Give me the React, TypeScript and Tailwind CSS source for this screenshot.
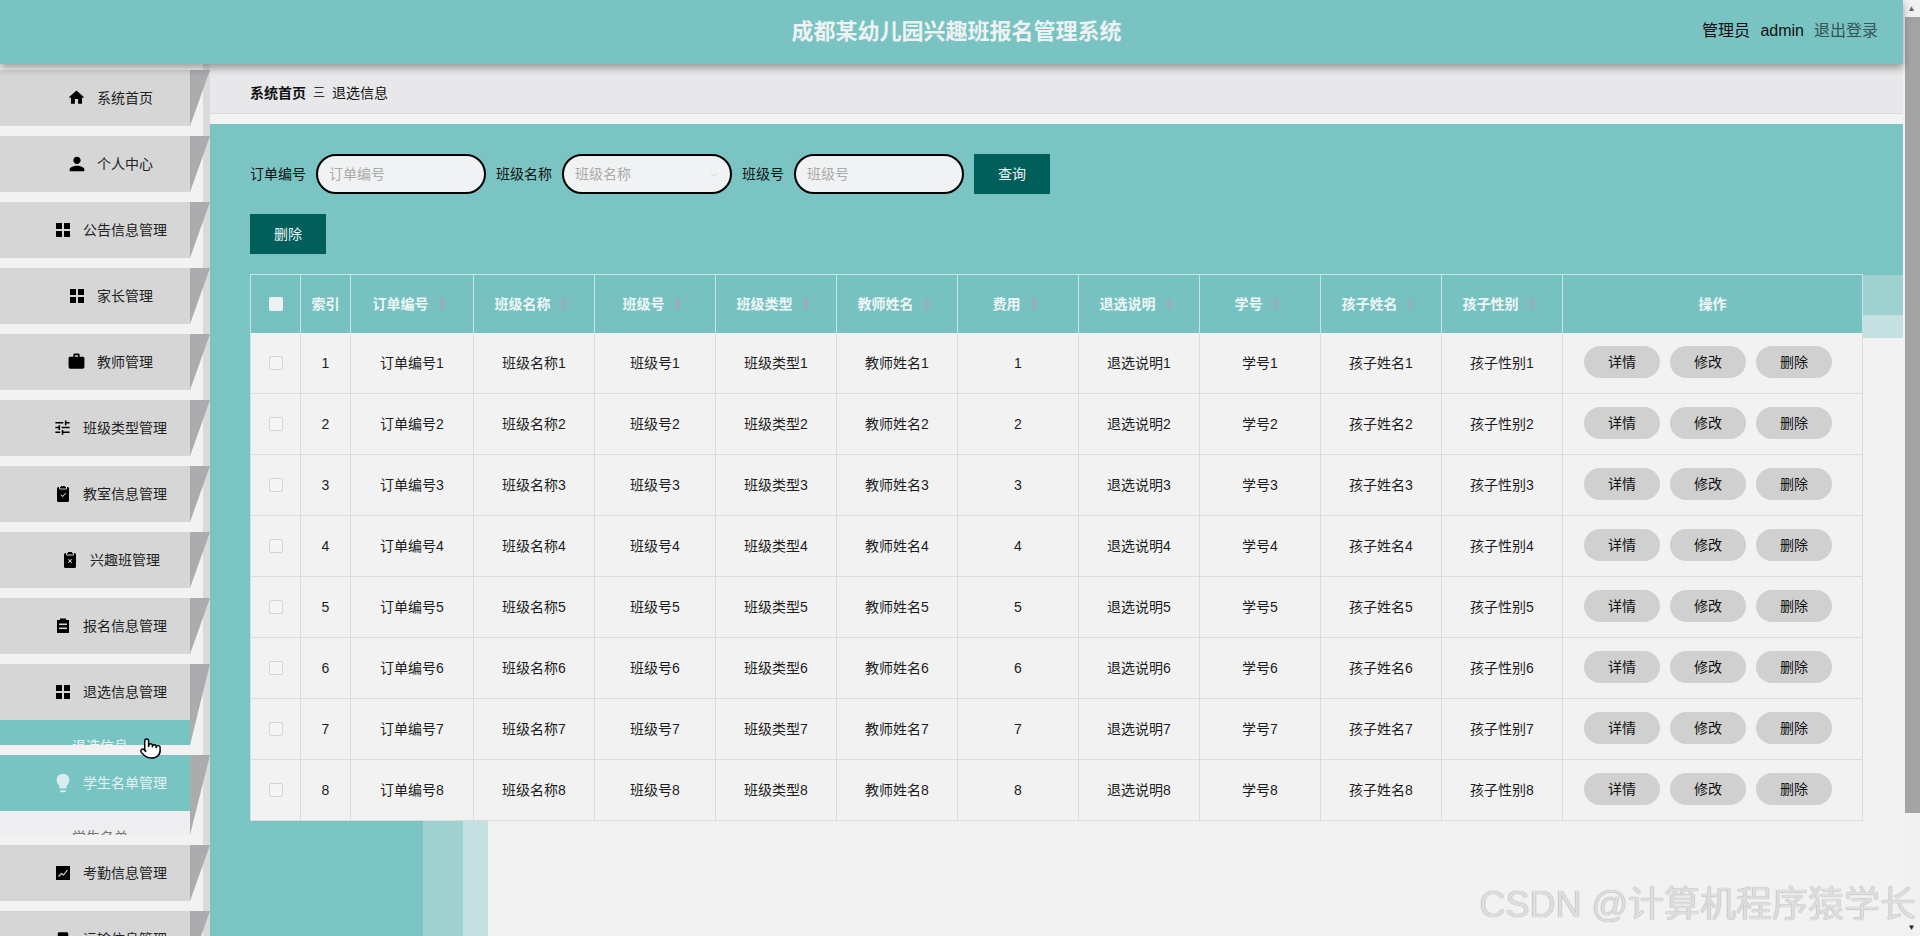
import React from 'react';
import { ChevronDown, Pointer } from 'lucide-react';
import { MdHome, MdPerson, MdWork, MdTune, MdLightbulb, MdBookmark } from 'react-icons/md';
import { BsClipboard2CheckFill, BsClipboard2XFill } from 'react-icons/bs';

// four black squares used by several menu entries
function GridIcon() {
  return (
    <svg width="14" height="14" viewBox="0 0 14 14" fill="#000">
      <rect x="0" y="0" width="6" height="6" />
      <rect x="8" y="0" width="6" height="6" />
      <rect x="0" y="8" width="6" height="6" />
      <rect x="8" y="8" width="6" height="6" />
    </svg>
  );
}

function ListClipIcon() {
  return (
    <svg width="14" height="15" viewBox="0 0 14 15">
      <path d="M1 2h3V0.5h6V2h3v13H1z" fill="#000" />
      <rect x="3" y="5.5" width="8" height="1.6" fill="#d6d6d6" />
      <rect x="3" y="9.5" width="8" height="1.6" fill="#d6d6d6" />
    </svg>
  );
}

function ChartIcon() {
  return (
    <svg width="14" height="14" viewBox="0 0 14 14">
      <rect width="14" height="14" fill="#000" />
      <path d="M2.5 10.5 L5.5 7.5 L7.5 9 L11.5 4" fill="none" stroke="#d6d6d6" strokeWidth="1.2" />
    </svg>
  );
}

type MenuItem = {
  label: string;
  icon: React.ReactNode;
  active?: boolean;
  sub?: string;
  subOn?: boolean;
};

const menu: MenuItem[] = [
  { label: '系统首页', icon: <MdHome size={19} color="#000" /> },
  { label: '个人中心', icon: <MdPerson size={22} color="#000" /> },
  { label: '公告信息管理', icon: <GridIcon /> },
  { label: '家长管理', icon: <GridIcon /> },
  { label: '教师管理', icon: <MdWork size={19} color="#000" /> },
  { label: '班级类型管理', icon: <MdTune size={19} color="#000" /> },
  { label: '教室信息管理', icon: <BsClipboard2CheckFill size={16} color="#000" /> },
  { label: '兴趣班管理', icon: <BsClipboard2XFill size={16} color="#000" /> },
  { label: '报名信息管理', icon: <ListClipIcon /> },
  { label: '退选信息管理', icon: <GridIcon />, sub: '退选信息', subOn: true },
  { label: '学生名单管理', icon: <MdLightbulb size={22} color="#d8eeee" />, active: true, sub: '学生名单' },
  { label: '考勤信息管理', icon: <ChartIcon /> },
  { label: '运输信息管理', icon: <MdBookmark size={18} color="#000" /> },
];

const columns = ['订单编号', '班级名称', '班级号', '班级类型', '教师姓名', '费用', '退选说明', '学号', '孩子姓名', '孩子性别'];
const rowIds = [1, 2, 3, 4, 5, 6, 7, 8];

function SortCaret() {
  return (
    <svg width="10" height="14" viewBox="0 0 10 14" fill="#a2a6b6" className="ml-2 shrink-0">
      <polygon points="5,1.5 9,5.5 1,5.5" />
      <polygon points="1,8.5 9,8.5 5,12.5" />
    </svg>
  );
}

function Sidebar() {
  return (
    <aside className="w-[210px] shrink-0 overflow-hidden pt-[6px] bg-[linear-gradient(to_right,#f2f2f2_203px,#dadadc_203px)]">
      {menu.map((item) => (
        <div key={item.label} className="flex mb-[10px]">
          <div className="w-[190px]">
            <div
              className={
                item.active
                  ? 'h-14 flex items-center justify-center gap-[13px] pl-[32px] pb-[1px] text-sm bg-[#78c4c3] text-[#e6f3f3]'
                  : 'h-14 flex items-center justify-center gap-[13px] pl-[32px] pb-[1px] text-sm bg-[#d6d6d7] text-[#222]'
              }
            >
              <span className="w-[15px] flex justify-center [&>svg]:shrink-0">{item.icon}</span>
              <span>{item.label}</span>
            </div>
            {item.sub && (
              <div
                className={
                  item.subOn
                    ? 'h-[25px] overflow-hidden pt-[19px] pl-[72px] text-sm leading-[14px] bg-[#78c4c3] text-[#e6f3f3]'
                    : 'h-[24px] overflow-hidden pt-[19px] pl-[72px] text-sm leading-[14px] bg-[#eeeef0] text-[#777]'
                }
              >
                {item.sub}
              </div>
            )}
          </div>
          <div className="w-[20px] bg-[#acacae] [clip-path:polygon(0_0,100%_0,0_100%)]" />
        </div>
      ))}
    </aside>
  );
}

function SearchField({ label, select }: { label: string; select?: boolean }) {
  return (
    <>
      <label className="text-sm text-[#111]">{label}</label>
      <div className="relative">
        <input
          placeholder={label}
          className="w-[170px] h-10 rounded-[20px] border-2 border-black bg-[#f0f2f3] pl-[11px] pb-[1px] text-sm outline-none placeholder:text-[#aaaaaa]"
        />
        {select && <ChevronDown size={12} color="#d8d8d8" className="absolute right-[12px] top-[15px]" />}
      </div>
    </>
  );
}

function DataTable() {
  return (
    <table className="w-[1613px] table-fixed border-separate border-spacing-0 text-sm text-[#1c1c1c]">
      <colgroup>
        <col className="w-[51px]" />
        <col className="w-[50px]" />
        {columns.map((c, i) => (
          <col key={c} className={i === 0 ? 'w-[123px]' : 'w-[121px]'} />
        ))}
        <col />
      </colgroup>
      <thead>
        <tr className="h-[59px] bg-[#77c2c0] text-[#eef6f6] font-bold">
          <th className="border-t border-l border-r border-[#c6e6e6] font-bold">
            <span className="block mx-auto w-[14px] h-[14px] rounded-[2px] bg-[#eef1f2]" />
          </th>
          <th className="border-t border-r border-[#c6e6e6] font-bold">索引</th>
          {columns.map((c) => (
            <th key={c} className="border-t border-r border-[#c6e6e6] font-bold">
              <span className="flex items-center justify-center pr-[5px]">
                {c}
                <SortCaret />
              </span>
            </th>
          ))}
          <th className="border-t border-r border-[#c6e6e6] font-bold">操作</th>
        </tr>
      </thead>
      <tbody>
        {rowIds.map((id) => (
          <tr key={id} className="h-[61px] bg-[#f2f2f2] text-center">
            <td className="border-l border-r border-b border-[#dcdcdc]">
              <span className="block mx-auto w-[14px] h-[14px] rounded-[2px] border border-[#d6d6d6] bg-[#f5f5f5]" />
            </td>
            <td className="border-r border-b border-[#dcdcdc]">{id}</td>
            {columns.map((c) => (
              <td key={c} className="border-r border-b border-[#dcdcdc]">
                {c === '费用' ? id : `${c}${id}`}
              </td>
            ))}
            <td className="border-r border-b border-[#dcdcdc] pb-[3px]">
              <div className="flex gap-[10px] pl-[21px]">
                {['详情', '修改', '删除'].map((a) => (
                  <button key={a} className="w-[76px] h-8 rounded-full bg-[#d0d0d0] text-sm text-[#111]">
                    {a}
                  </button>
                ))}
              </div>
            </td>
          </tr>
        ))}
      </tbody>
    </table>
  );
}

export default function App() {
  return (
    <div className="relative flex h-screen w-screen overflow-hidden bg-[#f2f2f2] font-['Liberation_Sans','Noto_Sans_CJK_SC',sans-serif]">
      <div className="flex min-w-0 flex-1 flex-col">
        {/* Top bar */}
        <header className="relative z-10 h-16 shrink-0 grid grid-cols-[1fr_auto_1fr] items-center bg-[#79c3c2] shadow-[0_4px_8px_rgba(0,0,0,0.35)]">
          <div />
          <h1 className="pl-[10px] pb-[1px] text-[22px] font-bold text-[#eef2f2]">成都某幼儿园兴趣班报名管理系统</h1>
          <div className="flex justify-end gap-[10px] pr-[25px] pb-[3px] text-base">
            <span className="text-[#111] [word-spacing:6px]">管理员 admin</span>
            <span className="text-[#335555]">退出登录</span>
          </div>
        </header>

        <div className="flex min-h-0 flex-1">
          <Sidebar />

          <main className="flex min-w-0 flex-1 flex-col">
            {/* Breadcrumb */}
            <div className="h-[50px] shrink-0 flex items-center pt-[8px] pl-10 text-sm bg-[#e8e8ea] border-b border-[#dddddd] text-[#111]">
              <span className="font-bold">系统首页</span>
              <span className="mx-[7px] text-xs text-[#333]">三</span>
              <span>退选信息</span>
            </div>
            <div className="h-[10px] shrink-0 bg-[#f3f3f3]" />

            <section className="relative flex-1 px-10 pt-[30px]">
              {/* Stepped background bands */}
              <div className="absolute inset-0 bg-[#c5e0e0] [clip-path:polygon(0_0,100%_0,100%_214px,278px_214px,278px_100%,0_100%)]" />
              <div className="absolute inset-0 bg-[#a0d1d1] [clip-path:polygon(0_0,100%_0,100%_191px,253px_191px,253px_100%,0_100%)]" />
              <div className="absolute inset-0 bg-[#7ac4c4] [clip-path:polygon(0_0,100%_0,100%_151px,213px_151px,213px_100%,0_100%)]" />

              <div className="relative">
                <div className="flex items-center gap-[10px]">
                  <SearchField label="订单编号" />
                  <SearchField label="班级名称" select />
                  <SearchField label="班级号" />
                  <button className="w-[76px] h-10 pb-[1px] bg-[#005f5b] text-sm text-[#eef6f6]">查询</button>
                </div>
                <button className="mt-5 w-[76px] h-10 block pb-[1px] bg-[#005f5b] text-sm text-[#eef6f6]">删除</button>
                <div className="mt-5">
                  <DataTable />
                </div>
              </div>
            </section>
          </main>
        </div>
      </div>

      {/* Page scrollbar */}
      <div className="w-[17px] shrink-0 flex flex-col items-end bg-[#f1f1f1]">
        <div className="h-[17px] w-full flex items-center justify-center text-[8px] leading-none text-[#606060]">▲</div>
        <div className="h-[796px] w-[15px] bg-[#a4a4a4]" />
        <div className="flex-1" />
        <div className="h-[17px] w-full flex items-center justify-center text-[8px] leading-none text-[#222]">▼</div>
      </div>

      {/* Mouse cursor */}
      <Pointer size={23} fill="#ffffff" color="#000000" strokeWidth={1.5} className="absolute left-[139px] top-[737px]" />

      {/* Watermark */}
      <div className="absolute right-[4px] top-[881px] whitespace-nowrap text-[36px] leading-[48px] text-[#dedede] [text-shadow:0_0_1px_#8f8f8f]">
        CSDN @计算机程序猿学长
      </div>
    </div>
  );
}
